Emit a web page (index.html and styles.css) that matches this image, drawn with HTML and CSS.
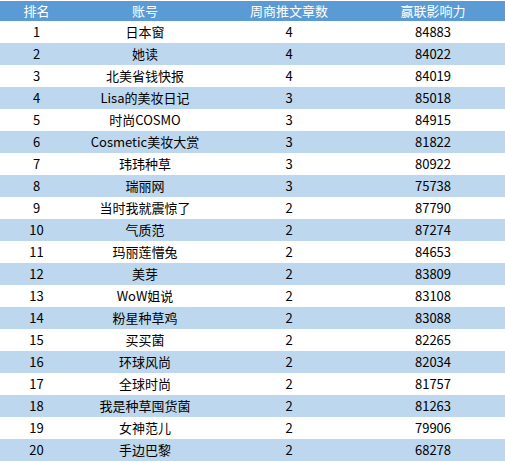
FILE: index.html
```html
<!DOCTYPE html>
<html>
<head>
<meta charset="utf-8">
<link rel="stylesheet" href="styles.css">
</head>
<body>
<div class="table">
  <div class="row head"><div>排名</div><div>账号</div><div>周商推文章数</div><div>赢联影响力</div></div>
  <div class="row"><div>1</div><div>日本窗</div><div>4</div><div>84883</div></div>
  <div class="row alt"><div>2</div><div>她读</div><div>4</div><div>84022</div></div>
  <div class="row"><div>3</div><div>北美省钱快报</div><div>4</div><div>84019</div></div>
  <div class="row alt"><div>4</div><div>Lisa的美妆日记</div><div>3</div><div>85018</div></div>
  <div class="row"><div>5</div><div>时尚COSMO</div><div>3</div><div>84915</div></div>
  <div class="row alt"><div>6</div><div>Cosmetic美妆大赏</div><div>3</div><div>81822</div></div>
  <div class="row"><div>7</div><div>玮玮种草</div><div>3</div><div>80922</div></div>
  <div class="row alt"><div>8</div><div>瑞丽网</div><div>3</div><div>75738</div></div>
  <div class="row"><div>9</div><div>当时我就震惊了</div><div>2</div><div>87790</div></div>
  <div class="row alt"><div>10</div><div>气质范</div><div>2</div><div>87274</div></div>
  <div class="row"><div>11</div><div>玛丽莲懵兔</div><div>2</div><div>84653</div></div>
  <div class="row alt"><div>12</div><div>美芽</div><div>2</div><div>83809</div></div>
  <div class="row"><div>13</div><div>WoW姐说</div><div>2</div><div>83108</div></div>
  <div class="row alt"><div>14</div><div>粉星种草鸡</div><div>2</div><div>83088</div></div>
  <div class="row"><div>15</div><div>买买菌</div><div>2</div><div>82265</div></div>
  <div class="row alt"><div>16</div><div>环球风尚</div><div>2</div><div>82034</div></div>
  <div class="row"><div>17</div><div>全球时尚</div><div>2</div><div>81757</div></div>
  <div class="row alt"><div>18</div><div>我是种草囤货菌</div><div>2</div><div>81263</div></div>
  <div class="row"><div>19</div><div>女神范儿</div><div>2</div><div>79906</div></div>
  <div class="row alt"><div>20</div><div>手边巴黎</div><div>2</div><div>68278</div></div>
</div>
</body>
</html>
```
FILE: styles.css
```css
html, body {
  margin: 0;
  padding: 0;
  background: #ffffff;
}
.table {
  width: 505px;
  padding-top: 1px;
  font-family: "Noto Sans CJK SC", "Noto Sans", sans-serif;
  font-size: 13px;
  color: #000000;
}
.row {
  display: grid;
  grid-template-columns: 73px 144px 144px 144px;
  height: 22px;
  align-items: center;
  text-align: center;
  white-space: nowrap;
}
.row > div {
  line-height: 22px;
}
.head {
  height: 20px;
  background: #5b9bd5;
  color: #ffffff;
}
.head > div {
  line-height: 20px;
}
.alt {
  background: #bdd7ee;
}
```
